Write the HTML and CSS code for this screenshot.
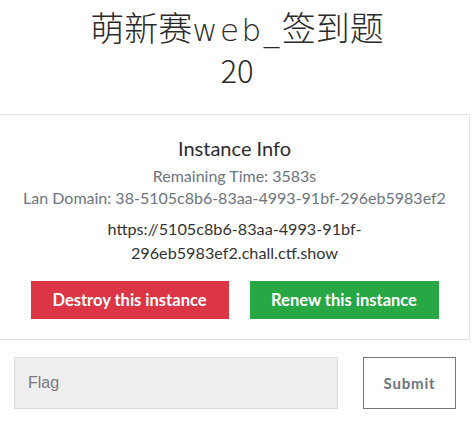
FILE: index.html
```html
<!DOCTYPE html>
<html lang="zh">
<head>
<meta charset="utf-8">
<link rel="stylesheet" href="styles.css">
</head>
<body>
<div class="page">
  <h1 class="title">萌新赛<span class="latin">web_</span>签到题</h1>
  <div class="points">20</div>
  <div class="card">
    <h2 class="card-title">Instance Info</h2>
    <div class="meta">Remaining Time: 3583s</div>
    <div class="meta">Lan Domain: 38-5105c8b6-83aa-4993-91bf-296eb5983ef2</div>
    <div class="url">https://5105c8b6-83aa-4993-91bf-<br>296eb5983ef2.chall.ctf.show</div>
    <div class="actions">
      <button class="btn btn-red">Destroy this instance</button>
      <button class="btn btn-green">Renew this instance</button>
    </div>
  </div>
  <div class="submit-row">
    <input class="flag" type="text" placeholder="Flag">
    <button class="submit">Submit</button>
  </div>
</div>
</body>
</html>
```
FILE: styles.css
```css
html, body {
  margin: 0;
  padding: 0;
  background: #fff;
}
body {
  font-family: Lato, "Noto Sans CJK SC", sans-serif;
  color: #212529;
  overflow: hidden;
}
.page {
  width: 474px;
}
.title {
  margin: 0;
  padding-top: 5px;
  height: 44px;
  text-align: center;
  font-family: "Noto Sans CJK SC", sans-serif;
  font-weight: 300;
  font-size: 34px;
  line-height: 44px;
  color: #2a2a2a;
}
.latin {
  font-family: "DejaVu Sans", sans-serif;
  font-weight: 200;
  font-size: 31px;
  letter-spacing: 2.5px;
  line-height: 0;
}
.points {
  margin-top: -1px;
  text-align: center;
  font-family: "Noto Sans CJK SC", sans-serif;
  font-weight: 300;
  font-size: 31px;
  line-height: 44px;
  color: #2a2a2a;
}
.card {
  margin-top: 22px;
  margin-left: -1px;
  width: 471px;
  height: 226px;
  border: 1px solid #e3e3e3;
  box-sizing: border-box;
  text-align: center;
  padding-top: 20px;
}
.card-title {
  margin: 0 0 4px;
  font-weight: 400;
  font-size: 20px;
  line-height: 26px;
  color: #2b2b2b;
}
.meta {
  font-size: 16px;
  line-height: 22px;
  color: #6c757d;
}
.url {
  margin-top: 8px;
  font-size: 16.2px;
  line-height: 24px;
  color: #333;
}
.actions {
  display: flex;
  justify-content: center;
  gap: 21px;
  margin-top: 16px;
}
.btn {
  height: 38px;
  border: none;
  color: #fff;
  font-family: Lato, sans-serif;
  font-weight: 700;
  font-size: 16.5px;
  padding: 0;
}
.btn-red {
  width: 198px;
  background: #dc3545;
}
.btn-green {
  width: 189px;
  background: #28a745;
}
.submit-row {
  display: flex;
  align-items: center;
  margin-top: 17px;
  padding-left: 14px;
}
.flag {
  width: 324px;
  height: 52px;
  box-sizing: border-box;
  background: #eeeeee;
  border: 1px solid #dddddd;
  padding: 0 13px;
  font-family: "Liberation Sans", Arial, sans-serif;
  font-size: 16px;
  color: #555;
}
.flag::placeholder {
  color: #7a7a7a;
}
.submit {
  margin-left: 25px;
  width: 93px;
  height: 52px;
  background: #fff;
  border: 1px solid #777;
  font-family: Lato, sans-serif;
  font-weight: 700;
  font-size: 15px;
  letter-spacing: 0.8px;
  color: #6c757d;
}
```
